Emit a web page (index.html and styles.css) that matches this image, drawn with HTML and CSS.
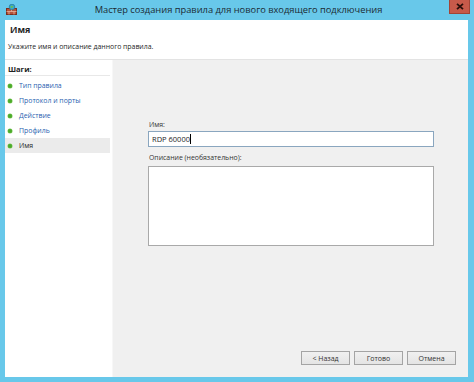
FILE: index.html
```html
<!DOCTYPE html>
<html lang="ru">
<head>
<meta charset="utf-8">
<link rel="stylesheet" href="styles.css">
</head>
<body>
<div class="window">
  <div class="titlebar">
    <svg class="appicon" width="11" height="11" viewBox="0 0 11 11">
      <rect x="0.5" y="4.5" width="10" height="6" fill="#b5523b" stroke="#7a2e1e" stroke-width="1"/>
      <line x1="0.5" y1="7.5" x2="10.5" y2="7.5" stroke="#e8b39c" stroke-width="0.8"/>
      <line x1="5.5" y1="4.5" x2="5.5" y2="7.5" stroke="#e8b39c" stroke-width="0.8"/>
      <line x1="3" y1="7.5" x2="3" y2="10.5" stroke="#e8b39c" stroke-width="0.8"/>
      <line x1="8" y1="7.5" x2="8" y2="10.5" stroke="#e8b39c" stroke-width="0.8"/>
      <circle cx="6" cy="3" r="2.8" fill="#3aa7c9" stroke="#1f6f8f" stroke-width="0.6"/>
      <path d="M4.5 2.2 Q6 1 7.5 2.6 Q6.4 3.6 5 4.2 Z" fill="#6cc04a"/>
    </svg>
    <div class="title">Мастер создания правила для нового входящего подключения</div>
    <div class="close">
      <svg width="8" height="7" viewBox="0 0 8 7"><path d="M1 0.8 L7 6.2 M7 0.8 L1 6.2" stroke="#2b0f0a" stroke-width="1.8"/></svg>
    </div>
  </div>
  <div class="client">
    <div class="header">
      <div class="h-title">Имя</div>
      <div class="h-sub">Укажите имя и описание данного правила.</div>
    </div>
    <div class="body">
      <div class="steps">
        <div class="steps-head">Шаги:</div>
        <ul class="step-list">
          <li class="step"><span class="dot"></span><span class="link">Тип правила</span></li>
          <li class="step"><span class="dot"></span><span class="link">Протокол и порты</span></li>
          <li class="step"><span class="dot"></span><span class="link">Действие</span></li>
          <li class="step"><span class="dot"></span><span class="link">Профиль</span></li>
          <li class="step current"><span class="dot"></span><span class="cur">Имя</span></li>
        </ul>
      </div>
      <div class="main">
        <div class="form">
          <label class="lbl">Имя:</label>
          <div class="input"><span>RDP 60000</span><span class="caret"></span></div>
          <label class="lbl lbl2">Описание (необязательно):</label>
          <div class="textarea"></div>
        </div>
        <div class="buttons">
          <div class="btn">&lt; Назад</div>
          <div class="btn">Готово</div>
          <div class="btn">Отмена</div>
        </div>
      </div>
    </div>
  </div>
</div>
</body>
</html>
```
FILE: styles.css
```css
* { box-sizing: border-box; }
html, body { margin: 0; padding: 0; }
body {
  width: 474px;
  height: 382px;
  overflow: hidden;
  font-family: "Open Sans", "Noto Sans", "Liberation Sans", sans-serif;
  color: #1e1e1e;
}
.window {
  width: 474px;
  height: 382px;
  background: #68c8ea;
  display: flex;
  flex-direction: column;
  padding: 0 6px 5px 5px;
}
.titlebar {
  height: 20px;
  flex: none;
  position: relative;
  display: flex;
  align-items: center;
  justify-content: center;
}
.appicon {
  position: absolute;
  left: 1px;
  top: 4px;
}
.title {
  font-size: 9.3px;
  color: #1b2a33;
  padding-left: 4px;
  margin-top: -1px;
}
.close {
  position: absolute;
  right: -2px;
  top: 0;
  width: 21px;
  height: 14px;
  background: #c75a4a;
  border: 1px solid #a24536;
  border-top: none;
  display: flex;
  align-items: center;
  justify-content: center;
}
.client {
  flex: 1;
  background: #ffffff;
  display: flex;
  flex-direction: column;
}
.header {
  height: 40px;
  flex: none;
  border-bottom: 1px solid #e3e3e3;
  padding: 4px 0 0 5px;
}
.h-title {
  font-weight: bold;
  font-size: 9px;
  line-height: 11px;
}
.h-sub {
  font-size: 6.9px;
  line-height: 10px;
  margin-top: 7px;
  margin-left: -2px;
}
.body {
  flex: 1;
  display: flex;
}
.steps {
  width: 108px;
  flex: none;
  background: #ffffff;
  border-right: 1px solid #f7f7f7;
  padding-top: 3px;
}
.steps-head {
  font-weight: bold;
  font-size: 7.5px;
  line-height: 12px;
  padding-left: 3px;
  border-bottom: 1px solid #e8e8e8;
  margin-right: 2px;
  color: #222;
}
.step-list {
  list-style: none;
  margin: 2px 0 0 0;
  padding: 0;
}
.step {
  height: 15px;
  display: flex;
  align-items: center;
  font-size: 6.9px;
  padding-left: 3px;
  margin-right: 2px;
}
.step.current {
  background: #ebebeb;
}
.dot {
  width: 4px;
  height: 4px;
  border-radius: 50%;
  background: #4caa2a;
  box-shadow: 0 0 0 0.5px #7cc85a;
  margin-right: 7px;
}
.link { color: #2a5fb0; }
.cur { color: #1e1e1e; }
.main {
  flex: 1;
  background: #f0f0f0;
  display: flex;
  flex-direction: column;
  justify-content: space-between;
  padding: 60px 34px 12px 35px;
}
.form {
  display: flex;
  flex-direction: column;
}
.lbl {
  font-size: 6.9px;
  line-height: 10px;
  color: #333;
  padding-left: 1px;
}
.lbl2 { margin-top: 6px; }
.input {
  height: 16px;
  background: #fff;
  border: 1px solid #8aa6bf;
  font-size: 7.5px;
  display: flex;
  align-items: center;
  padding-left: 3px;
  margin-top: 1px;
}
.caret {
  width: 1px;
  height: 10px;
  background: #000;
  margin-left: 0.5px;
}
.textarea {
  height: 80px;
  background: #fff;
  border: 1px solid #a9a9a9;
  margin-top: 3px;
}
.buttons {
  display: flex;
  justify-content: flex-end;
  gap: 4px;
  margin-right: -22px;
}
.btn {
  width: 49px;
  height: 14px;
  background: linear-gradient(#f0f0f0, #e4e4e4);
  border: 1px solid #a4a4a4;
  font-size: 7px;
  color: #333;
  display: flex;
  align-items: center;
  justify-content: center;
}
```
